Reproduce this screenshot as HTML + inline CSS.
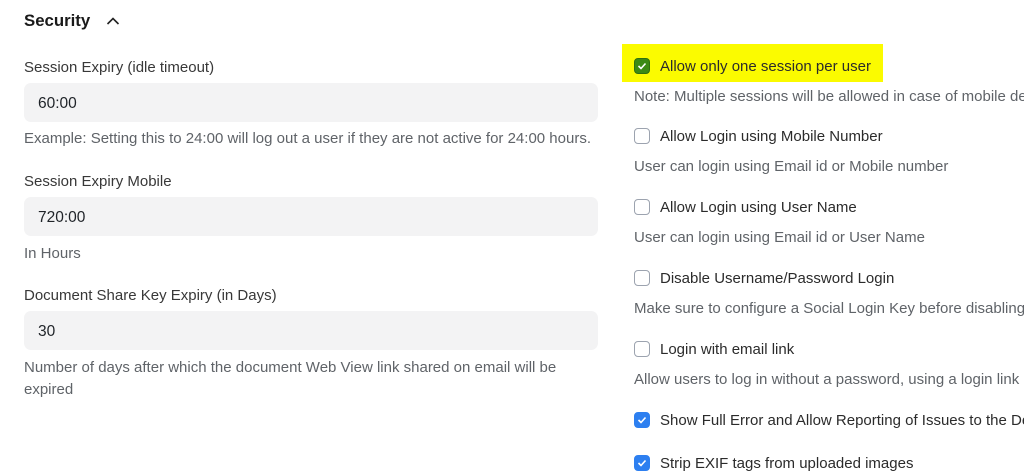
<!DOCTYPE html>
<html><head><meta charset="utf-8"><style>
html,body{margin:0;width:1024px;height:476px;overflow:hidden}
body{background:#fff;font-family:"Liberation Sans",Arial,sans-serif;position:relative;color:#1f2328}
.t{position:absolute;white-space:nowrap;line-height:22px;height:22px}
.lbl{font-size:15px;color:#383838}
.desc{font-size:15px;color:#5f6368}
.inp{position:absolute;left:24px;width:574px;height:39px;background:#f3f3f4;border-radius:7px;font-size:15.5px;line-height:41px;text-indent:14px;color:#1f2328}
.cb{position:absolute;left:634px;width:14px;height:14px;border:1.3px solid #9ca3af;border-radius:4px;background:#fff}
.cb.on{background:#2d7ff0;border-color:#2d7ff0}
.cb svg{position:absolute;left:2px;top:2px}
.ct{left:660px;font-size:15px;color:#2b2b2b}
.clip{position:absolute;left:0;top:0;width:1024px;height:476px;overflow:hidden}
</style></head><body><div class="clip">
<div class="t" style="left:24px;top:10px;font-size:16.8px;font-weight:bold;color:#1a1a1a">Security</div>
<svg style="position:absolute;left:106px;top:16px" width="14" height="10"><path d="M1.5 8 L7 2.5 L12.5 8" stroke="#222" stroke-width="1.6" fill="none"/></svg>

<div class="t lbl" style="left:24px;top:57px">Session Expiry (idle timeout)</div>
<div class="inp" style="top:83px">60:00</div>
<div class="t desc" style="left:24px;top:128px">Example: Setting this to 24:00 will log out a user if they are not active for 24:00 hours.</div>

<div class="t lbl" style="left:24px;top:171px">Session Expiry Mobile</div>
<div class="inp" style="top:197px">720:00</div>
<div class="t desc" style="left:24px;top:243px">In Hours</div>

<div class="t lbl" style="left:24px;top:285px">Document Share Key Expiry (in Days)</div>
<div class="inp" style="top:311px">30</div>
<div class="t desc" style="left:24px;top:357px">Number of days after which the document Web View link shared on email will be</div>
<div class="t desc" style="left:24px;top:379px">expired</div>

<div style="position:absolute;left:622px;top:44px;width:261px;height:38px;background:#fbfb00"></div>
<div class="cb on" style="top:58px;background:#3c8a14;border-color:#2f6f10"><svg width="10" height="10"><path d="M1.5 5 L4 7.5 L8.5 2.5" stroke="#fff" stroke-width="1.6" fill="none"/></svg></div>
<div class="t ct" style="top:56px">Allow only one session per user</div>
<div class="t desc" style="left:634px;top:86px">Note: Multiple sessions will be allowed in case of mobile device</div>

<div class="cb" style="top:128px"></div>
<div class="t ct" style="top:126px">Allow Login using Mobile Number</div>
<div class="t desc" style="left:634px;top:156px">User can login using Email id or Mobile number</div>

<div class="cb" style="top:199px"></div>
<div class="t ct" style="top:197px">Allow Login using User Name</div>
<div class="t desc" style="left:634px;top:227px">User can login using Email id or User Name</div>

<div class="cb" style="top:270px"></div>
<div class="t ct" style="top:268px">Disable Username/Password Login</div>
<div class="t desc" style="left:634px;top:298px">Make sure to configure a Social Login Key before disabling</div>

<div class="cb" style="top:341px"></div>
<div class="t ct" style="top:339px">Login with email link</div>
<div class="t desc" style="left:634px;top:369px">Allow users to log in without a password, using a login link</div>

<div class="cb on" style="top:412px"><svg width="10" height="10"><path d="M1.5 5 L4 7.5 L8.5 2.5" stroke="#fff" stroke-width="1.6" fill="none"/></svg></div>
<div class="t ct" style="top:410px">Show Full Error and Allow Reporting of Issues to the De</div>

<div class="cb on" style="top:455px"><svg width="10" height="10"><path d="M1.5 5 L4 7.5 L8.5 2.5" stroke="#fff" stroke-width="1.6" fill="none"/></svg></div>
<div class="t ct" style="top:453px">Strip EXIF tags from uploaded images</div>
</div></body></html>
